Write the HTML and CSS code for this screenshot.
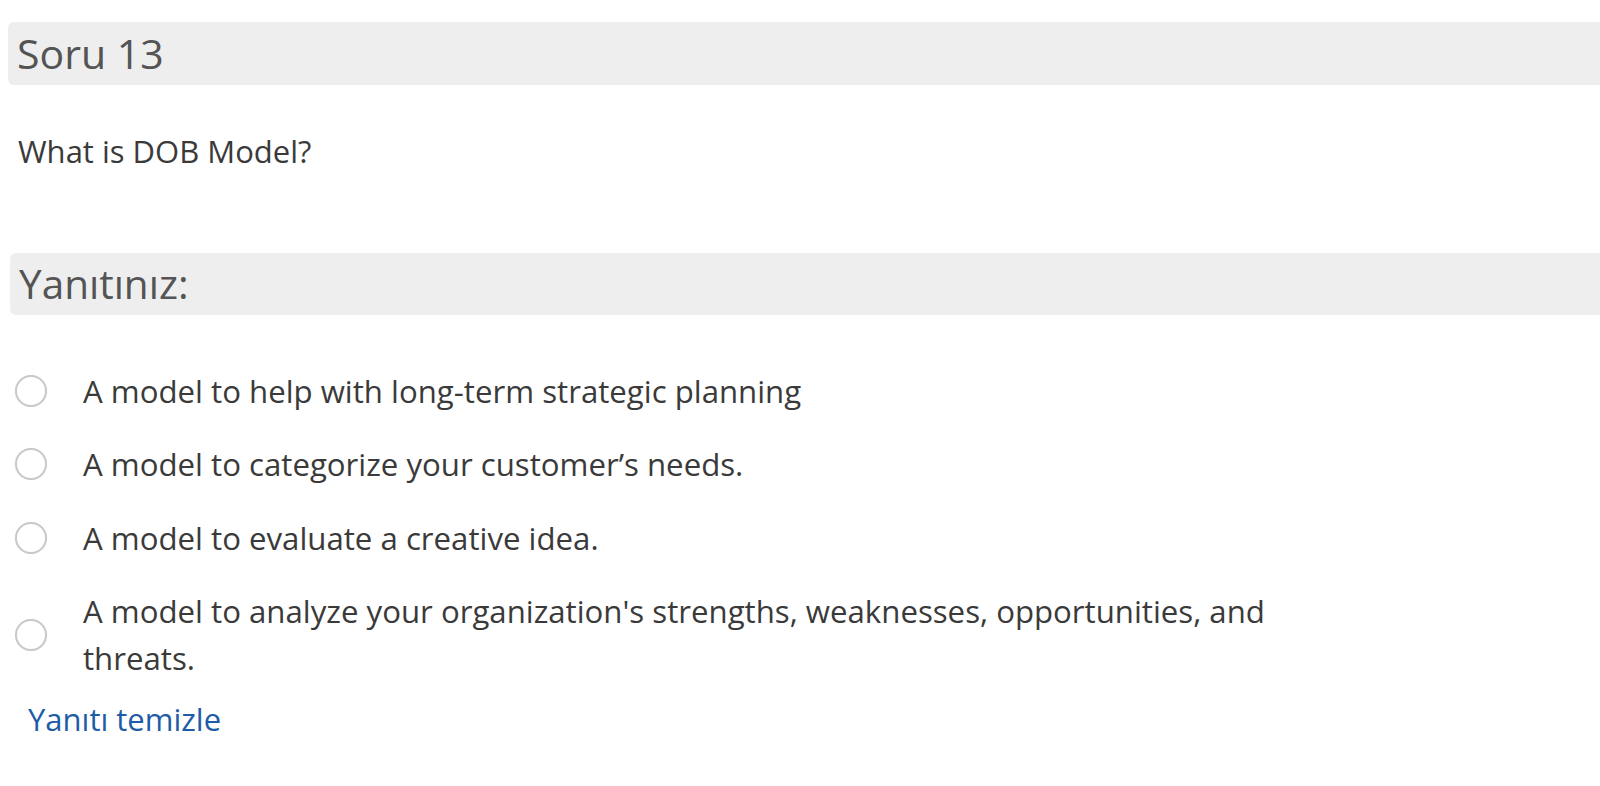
FILE: index.html
```html
<!DOCTYPE html>
<html lang="tr">
<head>
<meta charset="utf-8">
<title>Soru 13</title>
<link rel="stylesheet" href="styles.css">
</head>
<body>
<div class="que">
  <h3 class="que-no">Soru 13</h3>
  <div class="qtext">What is DOB Model?</div>
  <h4 class="prompt">Yanıtınız:</h4>
  <div class="answers">
    <label class="option"><span class="radio"></span><span class="opt-text">A model to help with long-term strategic planning</span></label>
    <label class="option"><span class="radio"></span><span class="opt-text">A model to categorize your customer’s needs.</span></label>
    <label class="option"><span class="radio"></span><span class="opt-text">A model to evaluate a creative idea.</span></label>
    <label class="option"><span class="radio"></span><span class="opt-text">A model to analyze your organization's strengths, weaknesses, opportunities, and threats.</span></label>
  </div>
  <a class="clear-link" href="#">Yanıtı temizle</a>
</div>
</body>
</html>
```
FILE: styles.css
```css
html, body {
  margin: 0;
  padding: 0;
  background: #ffffff;
}
body {
  font-family: "Open Sans", "Noto Sans", sans-serif;
  color: #3a3a3a;
}
.que {
  display: flex;
  flex-direction: column;
  align-items: stretch;
}
.que-no {
  margin: 22px 0 0 8px;
  height: 63px;
  line-height: 63px;
  padding-left: 9px;
  font-size: 41px;
  font-weight: 400;
  color: #545454;
  background: #eeeeee;
  border-radius: 6px 0 0 6px;
}
.qtext {
  margin: 43px 0 0 0;
  padding-left: 18px;
  font-size: 31px;
  line-height: 46.5px;
  color: #3a3a3a;
}
.prompt {
  margin: 78px 0 0 10px;
  height: 62px;
  line-height: 62px;
  padding-left: 9px;
  font-size: 40.5px;
  font-weight: 400;
  color: #545454;
  background: #eeeeee;
  border-radius: 6px 0 0 6px;
}
.answers {
  margin-top: 53px;
  display: flex;
  flex-direction: column;
  gap: 27px;
}
.option {
  display: flex;
  align-items: center;
  padding-left: 15px;
}
.radio {
  flex: none;
  box-sizing: border-box;
  width: 32px;
  height: 32px;
  border: 2px solid #c9c9c9;
  border-radius: 50%;
  background: #ffffff;
  box-shadow: 0 0 1px rgba(0,0,0,0.12);
}
.opt-text {
  margin-left: 36px;
  max-width: 1215px;
  font-size: 31.2px;
  line-height: 46.5px;
  color: #3a3a3a;
}
.clear-link {
  align-self: flex-start;
  margin: 15px 0 0 28px;
  font-size: 31px;
  line-height: 46.5px;
  color: #1d5ca6;
  text-decoration: none;
}
```
